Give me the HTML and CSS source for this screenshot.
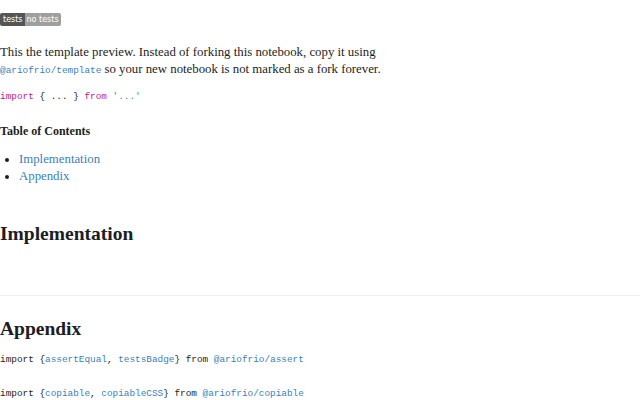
FILE: index.html
```html
<!DOCTYPE html>
<html>
<head>
<meta charset="utf-8">
<link rel="stylesheet" href="styles.css">
</head>
<body>
<div class="cell badge-cell">
  <span class="badge"><span class="badge-l">tests</span><span class="badge-r">no tests</span></span>
</div>
<div class="cell">
  <p class="prose">This the template preview. Instead of forking this notebook, copy it using<br><a class="code-link" href="#">@ariofrio/template</a> so your new notebook is not marked as a fork forever.</p>
</div>
<div class="cell">
  <pre class="code"><span class="kw">import</span> { ... } <span class="kw">from</span> <span class="str">'...'</span></pre>
</div>
<div class="cell toc">
  <h4 class="toc-title">Table of Contents</h4>
  <ul class="toc-list">
    <li><a href="#">Implementation</a></li>
    <li><a href="#">Appendix</a></li>
  </ul>
</div>
<div class="cell">
  <h2 class="section">Implementation</h2>
</div>
<hr class="divider">
<div class="cell">
  <h2 class="section appendix">Appendix</h2>
</div>
<div class="cell">
  <pre class="import">import {<a href="#">assertEqual</a>, <a href="#">testsBadge</a>} from <a href="#">@ariofrio/assert</a></pre>
</div>
<div class="cell">
  <pre class="import import-2">import {<a href="#">copiable</a>, <a href="#">copiableCSS</a>} from <a href="#">@ariofrio/copiable</a></pre>
</div>
</body>
</html>
```

FILE: styles.css
```css
html, body {
  margin: 0;
  padding: 0;
  background: #fff;
}
body {
  font-family: "Liberation Serif", serif;
  color: #1b1e23;
  font-size: 12.8px;
}
a {
  color: #3b7fb8;
  text-decoration: none;
}
.badge-cell {
  padding-top: 13px;
  height: 13px;
  line-height: 0;
}
.badge {
  display: inline-flex;
  font-family: "DejaVu Sans", "Liberation Sans", sans-serif;
  font-size: 8px;
  line-height: 13px;
  color: #fff;
  border-radius: 2px;
  overflow: hidden;
}
.badge-l {
  background: #555;
  padding: 0 2px 0 3px;
}
.badge-r {
  background: #9f9f9f;
  padding: 0 2px 0 2px;
}
.prose {
  margin: 18px 0 0;
  line-height: 17px;
}
.code-link {
  font-family: "Liberation Mono", monospace;
  font-size: 9.4px;
}
.code {
  margin: 11px 0 0;
  font-family: "Liberation Mono", monospace;
  font-size: 9.4px;
  line-height: 14px;
  color: #1b1e23;
}
.kw { color: #c2188c; }
.str { color: #2d9ba0; }
.toc-title {
  margin: 20px 0 0;
  font-size: 12px;
  font-weight: bold;
}
.toc-list {
  margin: 12px 0 0;
  padding-left: 19px;
  line-height: 17px;
}
.section {
  margin: 38px 0 0;
  font-size: 19.5px;
  font-weight: bold;
}
.divider {
  border: 0;
  border-top: 1px solid #eeeeee;
  margin: 50px 0 0;
}
.appendix {
  margin-top: 22px;
}
.import {
  margin: 13px 0 0;
  font-family: "Liberation Mono", monospace;
  font-size: 9.4px;
  line-height: 14px;
  color: #1b1e23;
}
.import-2 {
  margin-top: 20px;
}
```
